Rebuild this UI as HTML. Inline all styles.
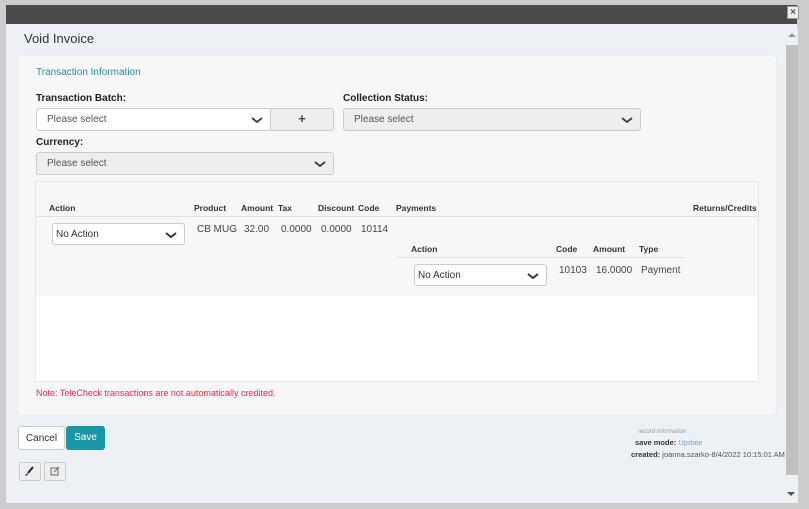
<!DOCTYPE html>
<html><head><style>
*{box-sizing:border-box;margin:0;padding:0}
body{width:809px;height:509px;background:#cccccc;font-family:"Liberation Sans",sans-serif;position:relative;overflow:hidden;color:#333}
.a{position:absolute}
.sel{position:absolute;border:1px solid #ccc;border-radius:3px;font-size:10px;color:#555;padding-left:10px}
.chev{position:absolute;right:7px;top:6px;width:12px;height:10px}
.lbl{position:absolute;font-size:10px;font-weight:bold;color:#222}
.th{position:absolute;font-size:8.5px;font-weight:bold;color:#333}
.td{position:absolute;font-size:10px;color:#444}
</style></head><body>
<div class="a" style="left:6px;top:5px;width:791px;height:498px;background:#edf0f4"></div>
<div class="a" style="left:6px;top:5px;width:791px;height:19px;background:#4b4b4b"></div>
<div class="a" style="left:787px;top:6px;width:12px;height:13px;background:#eee;border:1px solid #999;font-size:10px;line-height:11px;text-align:center;font-weight:bold;color:#555">×</div>
<div class="a" style="left:785px;top:28px;width:13px;height:475px;background:#edf0f4"></div>
<div class="a" style="left:786px;top:45px;width:12px;height:430px;background:#c0c0c0"></div>
<div class="a" style="left:788px;top:33px;width:0;height:0;border-left:4px solid transparent;border-right:4px solid transparent;border-bottom:4px solid #999"></div>
<div class="a" style="left:787px;top:492px;width:0;height:0;border-left:4px solid transparent;border-right:4px solid transparent;border-top:4px solid #555"></div>
<div class="a" style="left:24px;top:31px;font-size:13px;color:#333">Void Invoice</div>
<div class="a" style="left:18px;top:56px;width:758px;height:359px;background:#f7f7f7;border-radius:4px;box-shadow:0 0 1px #ddd"></div>
<div class="a" style="left:36px;top:67px;font-size:10px;color:#2a8fa0">Transaction Information</div>
<div class="lbl" style="left:36px;top:93px">Transaction Batch:</div>
<div class="sel" style="left:36px;top:108px;width:235px;height:23px;background:#fff;line-height:22px">Please select<svg class="chev" viewBox="0 0 12 10"><path d="M1 3l5 4 5-4" stroke="#444" stroke-width="2" fill="none"/></svg></div>
<div class="a" style="left:270px;top:108px;width:64px;height:23px;background:#eee;border:1px solid #ccc;border-radius:0 3px 3px 0;text-align:center;font-size:13px;font-weight:bold;line-height:20px;color:#444">+</div>
<div class="lbl" style="left:343px;top:93px">Collection Status:</div>
<div class="sel" style="left:343px;top:108px;width:298px;height:23px;background:#eee;line-height:22px">Please select<svg class="chev" viewBox="0 0 12 10"><path d="M1 3l5 4 5-4" stroke="#444" stroke-width="2" fill="none"/></svg></div>
<div class="lbl" style="left:36px;top:137px">Currency:</div>
<div class="sel" style="left:36px;top:152px;width:298px;height:23px;background:#eee;line-height:22px">Please select<svg class="chev" viewBox="0 0 12 10"><path d="M1 3l5 4 5-4" stroke="#444" stroke-width="2" fill="none"/></svg></div>
<div class="a" style="left:35px;top:181px;width:724px;height:201px;background:#fff;border:1px solid #e6e6e6"></div>
<div class="a" style="left:36px;top:182px;width:722px;height:114px;background:#f7f7f7"></div>
<div class="a" style="left:36px;top:216px;width:722px;height:1px;background:#e0e0e0"></div>
<div class="th" style="left:49px;top:203px">Action</div>
<div class="th" style="left:194px;top:203px">Product</div>
<div class="th" style="left:241px;top:203px">Amount</div>
<div class="th" style="left:278px;top:203px">Tax</div>
<div class="th" style="left:318px;top:203px">Discount</div>
<div class="th" style="left:358px;top:203px">Code</div>
<div class="th" style="left:396px;top:203px">Payments</div>
<div class="th" style="left:693px;top:203px">Returns/Credits</div>
<div class="sel" style="left:52px;top:223px;width:133px;height:22px;background:#fff;color:#333;padding-left:3px;line-height:22px">No Action<svg class="chev" viewBox="0 0 12 10"><path d="M1 3l5 4 5-4" stroke="#333" stroke-width="2" fill="none"/></svg></div>
<div class="td" style="left:197px;top:224px">CB MUG</div>
<div class="td" style="left:244px;top:224px">32.00</div>
<div class="td" style="left:281px;top:224px">0.0000</div>
<div class="td" style="left:321px;top:224px">0.0000</div>
<div class="td" style="left:361px;top:224px">10114</div>
<div class="th" style="left:411px;top:244px">Action</div>
<div class="th" style="left:556px;top:244px">Code</div>
<div class="th" style="left:593px;top:244px">Amount</div>
<div class="th" style="left:639px;top:244px">Type</div>
<div class="a" style="left:397px;top:257px;width:288px;height:1px;background:#e0e0e0"></div>
<div class="sel" style="left:414px;top:264px;width:133px;height:22px;background:#fff;color:#333;padding-left:3px;line-height:22px">No Action<svg class="chev" viewBox="0 0 12 10"><path d="M1 3l5 4 5-4" stroke="#333" stroke-width="2" fill="none"/></svg></div>
<div class="td" style="left:559px;top:265px">10103</div>
<div class="td" style="left:596px;top:265px">16.0000</div>
<div class="td" style="left:641px;top:265px">Payment</div>
<div class="a" style="left:36px;top:388px;font-size:9px;color:#e0304a">Note: TeleCheck transactions are not automatically credited.</div>
<div class="a" style="left:18px;top:426px;width:47px;height:24px;background:#fff;border:1px solid #ccc;border-radius:3px;font-size:10px;line-height:23px;text-align:center;color:#333">Cancel</div>
<div class="a" style="left:66px;top:426px;width:39px;height:24px;background:#1a97a6;border-radius:3px;font-size:10px;line-height:24px;text-align:center;color:#fff">Save</div>
<div class="a" style="left:19px;top:462px;width:22px;height:19px;background:#eee;border:1px solid #ccc;border-radius:2px"><svg width="20" height="17" viewBox="0 0 20 17"><path d="M13 4l-5 6" stroke="#222" stroke-width="2"/><path d="M7 10l-2 3 3-1z" fill="#222"/></svg></div>
<div class="a" style="left:44px;top:462px;width:22px;height:19px;background:#eee;border:1px solid #ccc;border-radius:2px"><svg width="20" height="17" viewBox="0 0 20 17"><rect x="6" y="5" width="7" height="7" fill="none" stroke="#666"/><path d="M9 9l5-5" stroke="#666"/></svg></div>
<div class="a" style="left:638px;top:429px;font-size:6px;font-style:italic;color:#999">record information</div>
<div class="a" style="left:635px;top:438px;font-size:7.5px;color:#333"><b>save mode:</b> <span style="color:#7aa7c7">Update</span></div>
<div class="a" style="left:631px;top:450px;font-size:7.5px;color:#555"><b style="color:#333">created:</b> joanna.szarko-8/4/2022 10:15:01 AM</div>
</body></html>
